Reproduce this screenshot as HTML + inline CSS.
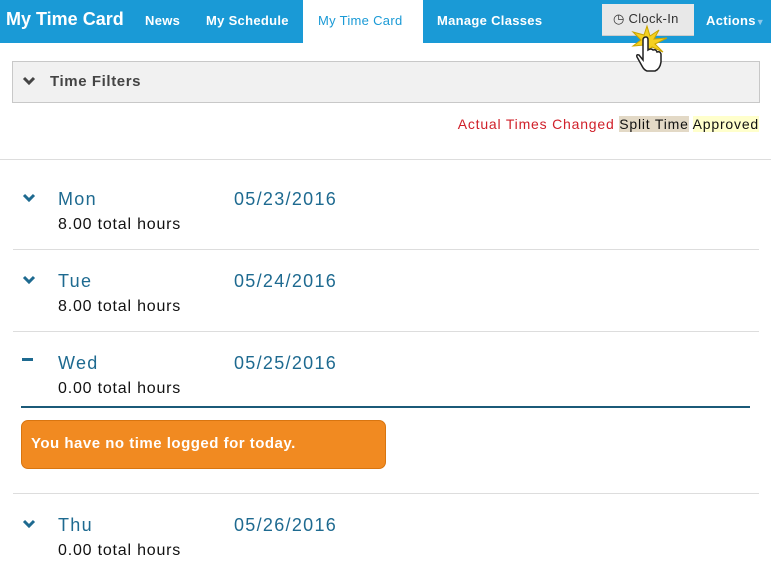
<!DOCTYPE html><html><head><style>
body{margin:0;width:771px;height:567px;overflow:hidden;background:#fff;font-family:"Liberation Sans",sans-serif;position:relative}
.a{position:absolute;white-space:nowrap}
.nav{left:0;top:0;width:771px;height:43px;background:#1a9ad6}
.nt{color:#fff;font-weight:bold;font-size:13px;top:13px;letter-spacing:.3px}
.day{color:#1e6a90;font-size:18px;letter-spacing:1.3px}
.hrs{color:#111;font-size:16px;letter-spacing:.8px}
.sep{height:1px;background:#ddd}
</style></head><body>
<div class="a nav"></div>
<div class="a" style="left:6px;top:9px;color:#fff;font-weight:bold;font-size:18px">My Time Card</div>
<div class="a nt" style="left:145px">News</div>
<div class="a nt" style="left:206px">My Schedule</div>
<div class="a" style="left:303px;top:0;width:120px;height:43px;background:#fff"></div>
<div class="a" style="left:318px;top:13px;color:#1a9ad6;font-size:13px;letter-spacing:.3px">My Time Card</div>
<div class="a nt" style="left:437px">Manage Classes</div>
<div class="a" style="left:602px;top:4px;width:92px;height:31px;background:#e8e8e8;border-bottom:1px solid #ccc"></div>
<div class="a" style="left:613px;top:11px;color:#333;font-size:13px;letter-spacing:.3px">◷ Clock-In</div>
<div class="a nt" style="left:706px">Actions<span style="color:#8cc8ea;font-size:9px">▼</span></div>
<div class="a" style="left:12px;top:61px;width:746px;height:40px;background:#f1f1f1;border:1px solid #c8c8c8"></div>
<svg class="a" style="left:625px;top:24px;z-index:5" width="50" height="52"><polygon points="22,2 25,12 34,6 29,15 42,14 30,20 38,28 27,23 20,30 19,21 8,22 16,16 8,8 19,11" fill="#f5d020" stroke="#c9a400"/><path d="M17 42 L12 33 Q11 30 14 31 L18 36 L18 16 Q18 13 21 13 Q23 13 23 16 L23 26 Q26 24 28 26 Q31 25 32 28 Q35 27 36 30 L36 38 Q35 45 30 47 L22 47 Q19 46 17 42Z" fill="#fff" stroke="#222" stroke-width="1.5"/></svg>
<svg class="a" style="left:22px;top:76px" width="14" height="10"><path d="M2 2 L7 7 L12 2" stroke="#444" stroke-width="3" fill="none"/></svg>
<div class="a" style="left:50px;top:73px;color:#444;font-size:15px;font-weight:bold;letter-spacing:.6px">Time Filters</div>
<div class="a" style="right:12px;top:116px;font-size:14px;letter-spacing:.8px"><span style="color:#d0202a">Actual Times Changed</span> <span style="background:#e3d9c6;color:#111">Split Time</span> <span style="background:#ffffcc;color:#111">Approved</span></div>
<div class="a sep" style="left:0;top:159px;width:771px"></div>
<svg class="a" style="left:22px;top:193px" width="14" height="10"><path d="M2 2 L7 7 L12 2" stroke="#1e6a90" stroke-width="3" fill="none"/></svg>
<div class="a day" style="left:58px;top:189px">Mon</div><div class="a day" style="left:234px;top:189px">05/23/2016</div>
<div class="a hrs" style="left:58px;top:216px">8.00 total hours</div>
<div class="a sep" style="left:13px;top:249px;width:746px"></div>
<svg class="a" style="left:22px;top:275px" width="14" height="10"><path d="M2 2 L7 7 L12 2" stroke="#1e6a90" stroke-width="3" fill="none"/></svg>
<div class="a day" style="left:58px;top:271px">Tue</div><div class="a day" style="left:234px;top:271px">05/24/2016</div>
<div class="a hrs" style="left:58px;top:298px">8.00 total hours</div>
<div class="a sep" style="left:13px;top:331px;width:746px"></div>
<div class="a" style="left:22px;top:358px;width:11px;height:3px;background:#1e6a90"></div>
<div class="a day" style="left:58px;top:353px">Wed</div><div class="a day" style="left:234px;top:353px">05/25/2016</div>
<div class="a hrs" style="left:58px;top:380px">0.00 total hours</div>
<div class="a" style="left:21px;top:406px;width:729px;height:2px;background:#1b5a78"></div>
<div class="a" style="left:21px;top:420px;width:363px;height:47px;background:#f18a21;border:1px solid #d87510;border-radius:7px"></div>
<div class="a" style="left:31px;top:435px;color:#fff;font-size:15px;font-weight:bold;letter-spacing:.5px">You have no time logged for today.</div>
<div class="a sep" style="left:13px;top:493px;width:746px"></div>
<svg class="a" style="left:22px;top:519px" width="14" height="10"><path d="M2 2 L7 7 L12 2" stroke="#1e6a90" stroke-width="3" fill="none"/></svg>
<div class="a day" style="left:58px;top:515px">Thu</div><div class="a day" style="left:234px;top:515px">05/26/2016</div>
<div class="a hrs" style="left:58px;top:542px">0.00 total hours</div>
</body></html>
